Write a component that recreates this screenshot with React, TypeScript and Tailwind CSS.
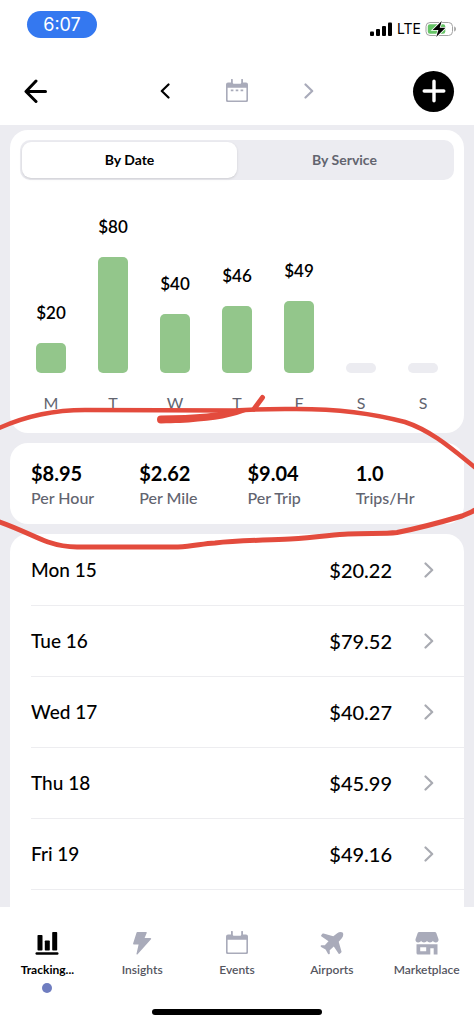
import { useState } from "react";
import type { ReactNode } from "react";
import clsx from "clsx";

interface DayEntry {
  label: string;
  letter: string;
  amount: number;
}

const week: DayEntry[] = [
  { label: "Mon 15", letter: "M", amount: 20.22 },
  { label: "Tue 16", letter: "T", amount: 79.52 },
  { label: "Wed 17", letter: "W", amount: 40.27 },
  { label: "Thu 18", letter: "T", amount: 45.99 },
  { label: "Fri 19", letter: "F", amount: 49.16 },
  { label: "Sat 20", letter: "S", amount: 0 },
  { label: "Sun 21", letter: "S", amount: 0 },
];

const stats = [
  { value: "$8.95", label: "Per Hour" },
  { value: "$2.62", label: "Per Mile" },
  { value: "$9.04", label: "Per Trip" },
  { value: "1.0", label: "Trips/Hr" },
];

const MAX_BAR = 117;
const MAX_AMOUNT = 80;

function Chevron({ left = false, className }: { left?: boolean; className?: string }) {
  return (
    <svg viewBox="0 0 10 16" className={clsx("w-[10px] h-4", className)} fill="none" stroke="currentColor" strokeWidth="2.2" strokeLinecap="round" strokeLinejoin="round">
      <path d={left ? "M8.5 1.5 L1.8 8 L8.5 14.5" : "M1.5 1.5 L8.2 8 L1.5 14.5"} />
    </svg>
  );
}

function CalendarIcon({ dots = false }: { dots?: boolean }) {
  return (
    <svg viewBox="0 0 24 24" className="w-6 h-6" fill="currentColor">
      <path
        fillRule="evenodd"
        d="M6 .8a.9.9 0 0 1 1.800 0V3.800a1 1 0 0 0 1 1h6.400a1 1 0 0 0 1-1V.8a.9.9 0 0 1 1.800 0V3.500H21a2 2 0 0 1 2 2V21.500a1.600 1.600 0 0 1-1.600 1.600H2.600A1.600 1.600 0 0 1 1 21.500V5.500a2 2 0 0 1 2-2h3zM2.600 8.800V20.800a.7.7 0 0 0 .7.7H20.700a.7.7 0 0 0 .7-.7V8.800z"
      />
      {dots && <path d="M5.800 10.500h2.600v1.800H5.800zM10.700 10.500h2.600v1.800h-2.600zM15.600 10.500h2.600v1.800h-2.600z" />}
    </svg>
  );
}

function TrackingIcon() {
  return (
    <svg viewBox="0 0 24 24" className="w-6 h-6" fill="currentColor">
      <rect x="2.500" y="4" width="5" height="15.500" rx="0.8" />
      <rect x="9.800" y="9.500" width="5" height="10" rx="0.8" />
      <rect x="17.200" y="1" width="5" height="18.500" rx="0.8" />
      <rect x="0.500" y="21.200" width="23" height="2.600" rx="1.200" />
    </svg>
  );
}

function BoltIcon() {
  return (
    <svg viewBox="0 0 24 24" className="w-6 h-6" fill="currentColor">
      <path d="M7.400 1h8.600a.8.8 0 0 1 .7 1.100L14.600 7h5.800a.8.8 0 0 1 .6 1.300L7.600 23.300c-.5.500-1.300.1-1.100-.6L8.600 13.500H4a.9.9 0 0 1-.9-1.100L6.500 1.700A1 1 0 0 1 7.400 1z" />
    </svg>
  );
}

function PlaneIcon() {
  return (
    <svg viewBox="0 0 24 24" className="w-6 h-6" fill="currentColor">
      <path d="M17.200 2.200c1.900-1.500 4.400-1.600 5.400-.6s.9 3.500-.6 5.400l-3.300 3.700 2.800 9.800c.1.400 0 .8-.3 1.100l-1.100 1c-.5.5-1.300.4-1.600-.2L13.800 15.500 9.700 19.200l.1 3.100c0 .3-.1.600-.3.800-.4.400-1.100.3-1.400-.2L5.600 18.400 1.100 15.900c-.5-.3-.6-1-.2-1.400.2-.2.5-.3.800-.3l3.100.1 3.700-4.100L1.600 5.500C1 5.200.9 4.400 1.400 3.900l1-1.100c.3-.3.700-.4 1.100-.3l9.800 2.800z" />
    </svg>
  );
}

function StoreIcon() {
  return (
    <svg viewBox="0 0 24 24" className="w-6 h-6" fill="currentColor">
      <path d="M4.200 1h15.600a1.600 1.600 0 0 1 1.500 1l2.200 6.200c.4 1.900-.9 3.300-2.700 3.300-1.300 0-2.400-.7-2.900-1.700-.5 1-1.600 1.700-2.900 1.700s-2.500-.7-3-1.700c-.5 1-1.700 1.700-3 1.700s-2.400-.7-2.900-1.700c-.5 1-1.600 1.700-2.900 1.700C1.400 11.500.1 10.100.5 8.200L2.700 2a1.600 1.600 0 0 1 1.500-1z" />
      <path fillRule="evenodd" d="M1.500 13.200h21V23.500h-3.800v-6.300h-3.400v6.300H3a1.500 1.500 0 0 1-1.500-1.500zM5.200 16.300v4h6v-4z" />
    </svg>
  );
}

function StatusBar() {
  return (
    <div className="flex h-[57px] items-start justify-between pt-[11px] pr-[17px] pl-[27px] font-[Inter,sans-serif]">
      <div className="flex h-[27px] w-[70px] items-center justify-center rounded-full bg-[#3478f0] text-lg text-white">6:07</div>
      <div className="flex items-center gap-1 pt-2">
        <svg viewBox="0 0 23 15" className="w-[23px] h-[15px]">
          <rect x="0" y="9.500" width="4" height="4.500" rx="1" />
          <rect x="6" y="7" width="4" height="7" rx="1" />
          <rect x="12" y="4" width="4" height="10" rx="1" />
          <rect x="18" y="0.500" width="4" height="13.500" rx="1" />
        </svg>
        <span className="text-sm leading-5">LTE</span>
        <svg viewBox="0 0 32 16" className="w-8 h-4">
          <rect x="1" y="1.500" width="26.500" height="13" rx="4" fill="none" stroke="#a3a3a3" />
          <rect x="2.800" y="3.300" width="17.500" height="9.400" rx="2.200" fill="#65c466" />
          <path d="M29.300 5.500c2 .6 2 4.400 0 5z" fill="#8f8f8f" />
          <path d="M16.800 0 L7.600 9h5.800L11.200 16 L20.500 6.800h-5.800z" stroke="#fff" strokeWidth="1.600" paintOrder="stroke" />
        </svg>
      </div>
    </div>
  );
}

function Header() {
  return (
    <header className="flex h-[68px] items-center justify-between px-5">
      <button aria-label="Back" className="flex h-[41px] w-[41px] items-center pl-1">
        <svg viewBox="0 0 24 24" className="w-6 h-6" fill="none" stroke="currentColor" strokeWidth="3" strokeLinecap="round" strokeLinejoin="round">
          <path d="M12 2 L2 12.500 L12 22.500 M2.500 12.500H21.500" />
        </svg>
      </button>
      <div className="flex items-center gap-[55px]">
        <button aria-label="Previous week">
          <Chevron left />
        </button>
        <button aria-label="Pick a date" className="text-[#a9abba]">
          <CalendarIcon dots />
        </button>
        <button aria-label="Next week" className="text-[#a9abba]">
          <Chevron />
        </button>
      </div>
      <button aria-label="Add" className="flex h-[41px] w-[41px] items-center justify-center rounded-full bg-black text-white">
        <svg viewBox="0 0 24 24" className="w-6 h-6" stroke="currentColor" strokeWidth="3.400" strokeLinecap="round">
          <path d="M12 2.200V21.800M2.200 12H21.800" />
        </svg>
      </button>
    </header>
  );
}

function Bar({ day }: { day: DayEntry }) {
  const height = Math.round((day.amount / MAX_AMOUNT) * MAX_BAR);

  return (
    <div className="flex flex-col items-center">
      {day.amount > 0 ? (
        <>
          <span className="mb-5 text-[17px] leading-5 font-semibold">${Math.round(day.amount)}</span>
          <div className="w-[30px] rounded-[5px] bg-[#93c68b]" style={{ height }} />
        </>
      ) : (
        <div className="h-[10px] w-[30px] rounded-full bg-[#ececf1]" />
      )}
      <span className="mt-5 text-base leading-5 text-[#62646f]">{day.letter}</span>
    </div>
  );
}

function ChartCard() {
  const [tab, setTab] = useState("By Date");

  return (
    <section className="rounded-[18px] bg-white px-[10px] pt-[10px] pb-5">
      <div role="tablist" className="flex h-10 rounded-[10px] bg-[#ececf1] p-[2px]">
        {["By Date", "By Service"].map((name) => (
          <button
            key={name}
            role="tab"
            aria-selected={tab === name}
            onClick={() => setTab(name)}
            className={clsx(
              "flex-1 rounded-[9px] text-sm font-bold",
              tab === name ? "bg-white text-black shadow-sm" : "text-[#62646f]"
            )}
          >
            {name}
          </button>
        ))}
      </div>
      <div className="grid grid-cols-7 items-end pt-[37px]">
        {week.map((day) => (
          <Bar key={day.label} day={day} />
        ))}
      </div>
    </section>
  );
}

// Hand-drawn marker loop around the averages
function MarkerLoop() {
  return (
    <svg
      viewBox="0 390 474 162"
      preserveAspectRatio="none"
      className="pointer-events-none absolute -top-[53px] left-0 z-10 h-[162px] w-full"
      fill="none"
      stroke="#e34b3d"
      strokeLinecap="round"
    >
      <path strokeWidth="4.500" d="M-3 429 C25 416 52 410 85 410 L234 410.500 C250 409.500 262 409 285 409 C335 408 372 413 405 422 C432 431 452 449 477 469" />
      <path strokeWidth="5" d="M-3 521 C18 528 34 537 48 542 C60 546 66 547 77 547 H178 C194 546.500 202 543.500 215 543 C240 540 265 540.500 290 539 C320 537 335 534.500 348 534 C368 533 384 534 397 532.500 C420 528 445 521 462 516 C469 513 472 512 477 509" />
      <path strokeWidth="5" d="M254 409 L262.500 397.500" />
      <path stroke="none" fill="#e34b3d" d="M161 415.500 C195 415.500 222 412.500 243 408 L256 408 C240 415 222 420 198 421.500 C185 423 175 423 161 423.500 A4 4 0 0 1 161 415.500Z" />
    </svg>
  );
}

function StatsCard() {
  return (
    <div className="relative px-[10px]">
      <dl className="grid grid-cols-4 rounded-[18px] bg-white pt-[18px] pb-[13px] pl-[21px]">
        {stats.map((stat) => (
          <div key={stat.label} className="flex flex-col-reverse">
            <dt className="text-base leading-[26px] font-medium text-[#62646f]">{stat.label}</dt>
            <dd className="text-xl leading-6 font-bold">{stat.value}</dd>
          </div>
        ))}
      </dl>
      <MarkerLoop />
    </div>
  );
}

function DayList() {
  return (
    <ul className="flex-1 rounded-t-[18px] bg-white pt-px pl-[21px]">
      {week
        .filter((day) => day.amount > 0)
        .map((day) => (
          <li key={day.label} className="border-b border-[#ededf0]">
            <button className="flex h-[70px] w-full items-center pr-[30px] text-xl font-medium">
              <span className="flex-1 text-left text-[19px]">{day.label}</span>
              <span>${day.amount.toFixed(2)}</span>
              <Chevron className="ml-8 text-[#a9abb2]" />
            </button>
          </li>
        ))}
    </ul>
  );
}

function NavItem({ icon, label, active = false }: { icon: ReactNode; label: string; active?: boolean }) {
  return (
    <a href="#" aria-current={active ? "page" : undefined} className="flex flex-col items-center">
      <span className={active ? "text-black" : "text-[#a9abba]"}>{icon}</span>
      <span className={clsx("mt-[7px] text-xs leading-4", active ? "font-bold text-black" : "font-semibold text-[#55565f]")}>
        {label}
      </span>
      {active && <span className="mt-[5px] h-[10px] w-[10px] rounded-full bg-[#6f7dc0]" />}
    </a>
  );
}

export default function App() {
  return (
    <div className="flex min-h-screen flex-col bg-white font-[Lato,sans-serif] text-black">
      <StatusBar />
      <Header />

      <main className="flex flex-1 flex-col gap-[10px] overflow-hidden bg-[#ececf1] pt-[5px]">
        <div className="px-[10px]">
          <ChartCard />
        </div>
        <StatsCard />
        <div className="flex flex-1 px-[10px]">
          <DayList />
        </div>
      </main>

      {/* Bottom navigation */}
      <footer className="pb-[11px]">
        <nav className="grid grid-cols-5 pt-6 pb-4">
          <NavItem icon={<TrackingIcon />} label="Tracking..." active />
          <NavItem icon={<BoltIcon />} label="Insights" />
          <NavItem icon={<CalendarIcon />} label="Events" />
          <NavItem icon={<PlaneIcon />} label="Airports" />
          <NavItem icon={<StoreIcon />} label="Marketplace" />
        </nav>
        <div className="mx-auto h-[6px] w-[170px] rounded-full bg-black" />
      </footer>
    </div>
  );
}
